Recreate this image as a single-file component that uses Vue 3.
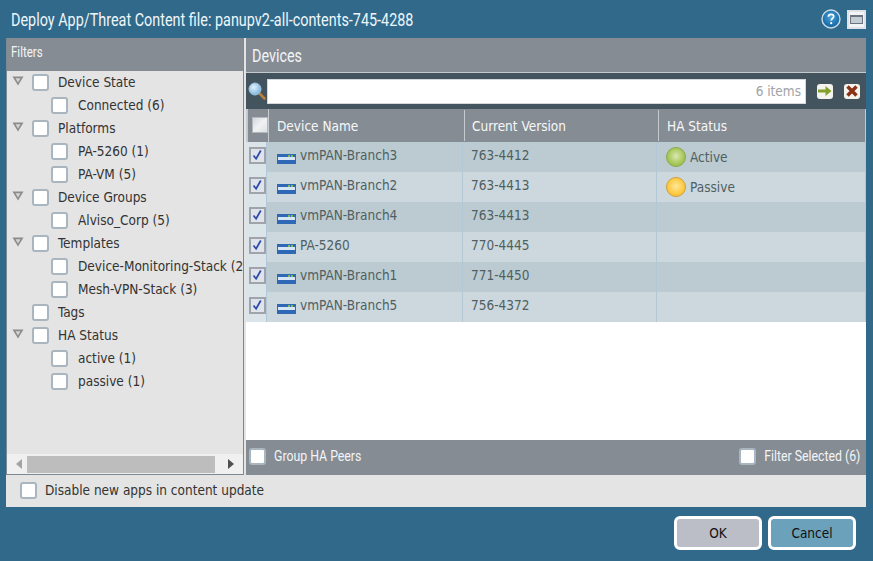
<template>
  <div class="dialog">
    <div class="title-bar">
      <span class="title squeeze">Deploy App/Threat Content file: panupv2-all-contents-745-4288</span>
      <div class="title-tools">
        <svg class="help" width="20" height="20" viewBox="0 0 20 20">
          <defs>
            <radialGradient id="helpFill" cx="50%" cy="40%" r="60%">
              <stop offset="0%" stop-color="#4aa3dc" />
              <stop offset="100%" stop-color="#0f5f9c" />
            </radialGradient>
          </defs>
          <circle cx="10" cy="10" r="9" fill="url(#helpFill)" stroke="#c9dbe6" stroke-width="1.4" />
          <path d="M7.4 7.8c0-1.6 1.2-2.4 2.7-2.4s2.6.9 2.6 2.2c0 1.9-2.5 1.9-2.5 3.8" fill="none" stroke="#fff" stroke-width="1.7" />
          <circle cx="10.2" cy="14.2" r="1.1" fill="#fff" />
        </svg>
        <div class="maximize"><span></span></div>
      </div>
    </div>

    <div class="panel">
      <div class="columns">
        <aside class="filters">
          <div class="filters-head"><span class="squeeze">Filters</span></div>
          <div class="tree">
            <div v-for="node in filters" :key="node.label" class="tree-row" :class="{ child: node.child }">
              <svg v-if="node.open" class="arrow" width="12" height="10" viewBox="0 0 12 10">
                <path d="M0.5 0.5h11L6 9.5z" fill="#8b8b8b" />
                <path d="M3.5 2.2h5L6 6.5z" fill="#d4d4d4" />
              </svg>
              <span v-else-if="!node.child" class="arrow"></span>
              <span class="box"></span>
              <span class="tree-label">{{ node.label }}</span>
            </div>
          </div>
          <div class="scrollbar">
            <svg width="6" height="10" viewBox="0 0 6 10"><path d="M6 0v10L0 5z" fill="#a3a3a3" /></svg>
            <div class="scroll-track"><div class="scroll-thumb"></div></div>
            <svg width="6" height="10" viewBox="0 0 6 10"><path d="M0 0v10l6-5z" fill="#505050" /></svg>
          </div>
        </aside>

        <section class="devices">
          <div class="devices-head"><span class="squeeze">Devices</span></div>
          <div class="search-bar">
            <svg class="lens" width="18" height="18" viewBox="0 0 18 18">
              <defs>
                <radialGradient id="lensFill" cx="40%" cy="35%" r="65%">
                  <stop offset="0%" stop-color="#e4f2fb" />
                  <stop offset="100%" stop-color="#7db5e0" />
                </radialGradient>
              </defs>
              <path d="M11.5 11.5l5 5" stroke="#b9803c" stroke-width="2.6" stroke-linecap="round" />
              <circle cx="7" cy="7" r="6" fill="url(#lensFill)" stroke="#9cc4e2" />
            </svg>
            <div class="search-input">6 items</div>
            <div class="tool-btn">
              <svg width="14" height="12" viewBox="0 0 14 12">
                <path d="M0 4.5h7.5V1L13.5 6l-6 5V7.5H0z" fill="#84a02a" />
              </svg>
            </div>
            <div class="tool-btn">
              <svg width="14" height="14" viewBox="0 0 14 14">
                <path d="M2.5 2.5l9 9M11.5 2.5l-9 9" stroke="#8a3218" stroke-width="3.4" />
              </svg>
            </div>
          </div>

          <div class="table-head">
            <div class="cell check-cell"><span class="head-check"></span></div>
            <div class="cell name-cell">Device Name</div>
            <div class="cell version-cell">Current Version</div>
            <div class="cell ha-cell">HA Status</div>
          </div>
          <div class="table-body">
            <div v-for="device in devices" :key="device.name" class="table-row">
              <div class="cell check-cell">
                <span class="row-check">
                  <svg width="12" height="12" viewBox="0 0 12 12">
                    <path d="M2.5 6.5l2.6 3.2L9.8 1.5" fill="none" stroke="#2f4da8" stroke-width="1.8" />
                  </svg>
                </span>
              </div>
              <div class="cell name-cell">
                <svg class="device-icon" width="19" height="10" viewBox="0 0 19 10">
                  <rect width="19" height="10" fill="#2f68b4" />
                  <rect x="1" y="3" width="17" height="3" fill="#d6e6f4" />
                  <rect x="11" y="1" width="2" height="2" fill="#7fc04a" />
                  <rect x="14" y="1" width="2" height="2" fill="#7fc04a" />
                </svg>
                <span>{{ device.name }}</span>
              </div>
              <div class="cell version-cell">{{ device.version }}</div>
              <div class="cell ha-cell">
                <template v-if="device.ha">
                  <span class="led" :class="device.ha.toLowerCase()"></span>
                  <span>{{ device.ha }}</span>
                </template>
              </div>
            </div>
          </div>
          <div class="devices-foot">
            <label class="foot-item"><span class="box"></span><span class="squeeze">Group HA Peers</span></label>
            <label class="foot-item"><span class="box"></span><span class="squeeze right">Filter Selected (6)</span></label>
          </div>
        </section>
      </div>
      <div class="option-row">
        <span class="box"></span>
        <span>Disable new apps in content update</span>
      </div>
    </div>

    <div class="actions">
      <button class="btn ok">OK</button>
      <button class="btn cancel">Cancel</button>
    </div>
  </div>
</template>

<script setup>
const filters = [
  { label: 'Device State', open: true },
  { label: 'Connected (6)', child: true },
  { label: 'Platforms', open: true },
  { label: 'PA-5260 (1)', child: true },
  { label: 'PA-VM (5)', child: true },
  { label: 'Device Groups', open: true },
  { label: 'Alviso_Corp (5)', child: true },
  { label: 'Templates', open: true },
  { label: 'Device-Monitoring-Stack (2)', child: true },
  { label: 'Mesh-VPN-Stack (3)', child: true },
  { label: 'Tags' },
  { label: 'HA Status', open: true },
  { label: 'active (1)', child: true },
  { label: 'passive (1)', child: true }
]

const devices = [
  { name: 'vmPAN-Branch3', version: '763-4412', ha: 'Active' },
  { name: 'vmPAN-Branch2', version: '763-4413', ha: 'Passive' },
  { name: 'vmPAN-Branch4', version: '763-4413', ha: '' },
  { name: 'PA-5260', version: '770-4445', ha: '' },
  { name: 'vmPAN-Branch1', version: '771-4450', ha: '' },
  { name: 'vmPAN-Branch5', version: '756-4372', ha: '' }
]
</script>

<style>
html,
body {
  margin: 0;
  background: #30698a;
}
</style>

<style scoped>
.dialog {
  width: 873px;
  height: 561px;
  background: #30698a;
  font-family: "DejaVu Sans Condensed", "DejaVu Sans", sans-serif;
  font-size: 13.5px;
  color: #333;
  overflow: hidden;
  display: flex;
  flex-direction: column;
}

/* headings in the reference are a tall narrow face */
.squeeze {
  display: inline-block;
  font-family: Roboto, sans-serif;
  white-space: nowrap;
  transform: scaleX(0.82);
  transform-origin: left center;
}

.squeeze.right {
  transform-origin: right center;
  margin-left: -21px;
}

.title-bar {
  height: 38px;
  box-sizing: border-box;
  padding: 0 7px 0 11px;
  display: flex;
  align-items: center;
  justify-content: space-between;
}

.title {
  font-size: 18px;
  color: #eef6fa;
  transform: scaleX(0.8);
}

.title-tools {
  display: flex;
  align-items: center;
  gap: 6px;
}

.maximize {
  width: 19px;
  height: 19px;
  box-sizing: border-box;
  background: #f2f4f6;
  border: 2px solid #dfe3e7;
  padding: 3px 1px;
}

.maximize span {
  display: block;
  height: 100%;
  box-sizing: border-box;
  background: #c4ccd4;
  border: 1px solid #6b7480;
  border-top-width: 2px;
}

.panel {
  width: 860px;
  height: 469px;
  margin-left: 6px;
  background: #e4e4e4;
  display: flex;
  flex-direction: column;
}

.columns {
  height: 437px;
  display: flex;
  justify-content: space-between;
}

.filters {
  width: 238px;
  box-sizing: border-box;
  border-left: 1px solid #7d8891;
  border-right: 1px solid #7d8891;
  border-bottom: 1px solid #7d8891;
  display: flex;
  flex-direction: column;
}

.filters-head {
  height: 33px;
  flex: none;
  box-sizing: border-box;
  padding: 6px 4px;
  background: #868c94;
  color: #f2f5f7;
  font-size: 14px;
}

.tree {
  flex: 1;
  overflow: hidden;
}

.tree-row {
  height: 23px;
  display: flex;
  align-items: center;
  gap: 9px;
  white-space: nowrap;
}

.tree-label {
  padding-bottom: 2px;
}

.tree-row .arrow {
  width: 12px;
  flex: none;
  margin-left: 5px;
  margin-right: -1px;
  margin-bottom: 4px;
}

.tree-row .box {
  margin-bottom: 1px;
}

.tree-row.child {
  padding-left: 44px;
  gap: 10px;
}

.box {
  width: 13px;
  height: 13px;
  flex: none;
  background: #fff;
  border: 2px solid #a9b5bf;
  border-radius: 3px;
}

.scrollbar {
  height: 20px;
  flex: none;
  display: flex;
  align-items: center;
  justify-content: space-between;
  padding: 0 9px;
  box-sizing: border-box;
  background: #f0f0f0;
}

.scroll-track {
  flex: 1;
  margin: 0 4px 0 5px;
}

.scroll-thumb {
  width: 188px;
  height: 17px;
  background: #bdbdbd;
}

.devices {
  width: 620px;
  display: flex;
  flex-direction: column;
  background: #fff;
}

.devices-head {
  height: 35px;
  flex: none;
  box-sizing: border-box;
  padding: 8px 6px;
  background: #868c94;
  color: #f2f5f7;
  font-size: 17.5px;
  border-bottom: 1px solid #c4cace;
}

.search-bar {
  height: 36px;
  flex: none;
  box-sizing: border-box;
  background: #44545f;
  display: flex;
  align-items: center;
  padding-left: 2px;
}

.lens {
  flex: none;
  margin-right: 1px;
}

.search-input {
  width: 539px;
  height: 25px;
  box-sizing: border-box;
  background: #fff;
  color: #a0a4a8;
  text-align: right;
  padding: 3px 4px;
  border: 1px solid #d6d8da;
}

.tool-btn {
  width: 16px;
  height: 15px;
  margin-left: 11px;
  background: #f4f3ee;
  border-radius: 3px;
  display: flex;
  align-items: center;
  justify-content: center;
}

.table-head,
.table-row {
  display: flex;
}

.table-head {
  height: 33px;
  flex: none;
  background: #868c94;
  color: #f6f8f9;
  border-left: 2px solid #c4cace;
  box-sizing: border-box;
}

.cell {
  display: flex;
  align-items: center;
  box-sizing: border-box;
}

.check-cell {
  width: 21px;
  justify-content: center;
}

.name-cell {
  width: 196px;
  padding-left: 10px;
  gap: 4px;
}

.version-cell {
  width: 194px;
  padding-left: 8px;
}

.ha-cell {
  flex: 1;
  padding-left: 9px;
  gap: 4px;
}

.table-head .cell {
  border-right: 1px solid #c4cace;
}

.table-head .check-cell {
  padding: 0 0 2px 4px;
}

.table-head .name-cell {
  padding-left: 8px;
  margin: 1px 0;
}

.table-head .version-cell {
  padding-left: 7px;
  margin: 1px 0;
}

.table-head .ha-cell {
  padding-left: 8px;
}

.head-check {
  width: 14px;
  height: 14px;
  background: linear-gradient(135deg, #d4d7da, #f0f1f3 50%, #dfe1e4);
  border: 1px solid #b3b8bd;
}

.table-body {
  flex: 1;
}

.table-row {
  height: 30px;
  color: #4f5f62;
}

.table-row:nth-child(odd) {
  background: #bccbd1;
}

.table-row:nth-child(even) {
  background: #ccd8de;
}

.table-row .cell {
  border-right: 1px solid #b3c8d6;
}

.table-row .check-cell {
  background: #dae4e9;
  padding: 0 0 4px 2px;
}

.row-check {
  width: 13px;
  height: 13px;
  display: flex;
  align-items: center;
  justify-content: center;
  background: #dfe3ec;
  border: 2px solid #a0a4aa;
}

.device-icon {
  flex: none;
  margin-top: 4px;
}

.table-row .name-cell span,
.table-row .version-cell {
  line-height: 1;
  padding-bottom: 3px;
}

.led {
  width: 20px;
  height: 20px;
  box-sizing: border-box;
  border-radius: 50%;
}

.led.active {
  background: radial-gradient(circle at 50% 45%, #dbe8b4 0%, #a9c95c 55%, #8eb33c 100%);
  border: 1px solid #8aa848;
}

.led.passive {
  background: radial-gradient(circle at 50% 45%, #ffe79c 0%, #fdc93f 60%, #f3b02a 100%);
  border: 1px solid #cf9f3c;
}

.devices-foot {
  height: 35px;
  flex: none;
  box-sizing: border-box;
  padding: 0 6px 3px 3px;
  background: #868c94;
  color: #f2f5f7;
  font-size: 15px;
  display: flex;
  align-items: center;
  justify-content: space-between;
}

.foot-item {
  display: flex;
  align-items: center;
  gap: 8px;
}

.option-row {
  flex: 1;
  display: flex;
  align-items: center;
  gap: 8px;
  padding: 0 0 2px 14px;
  color: #333;
}

.actions {
  flex: 1;
  display: flex;
  justify-content: flex-end;
  align-items: flex-start;
  gap: 6px;
  padding: 9px 17px 0 0;
}

.btn {
  width: 88px;
  height: 34px;
  box-sizing: border-box;
  border: 3px solid #fff;
  border-radius: 6px;
  color: #111;
  font-family: "DejaVu Sans Condensed", "DejaVu Sans", sans-serif;
  font-size: 13.5px;
}

.btn.ok {
  background: #bbbec6;
}

.btn.cancel {
  background: #6ca1bb;
}
</style>
